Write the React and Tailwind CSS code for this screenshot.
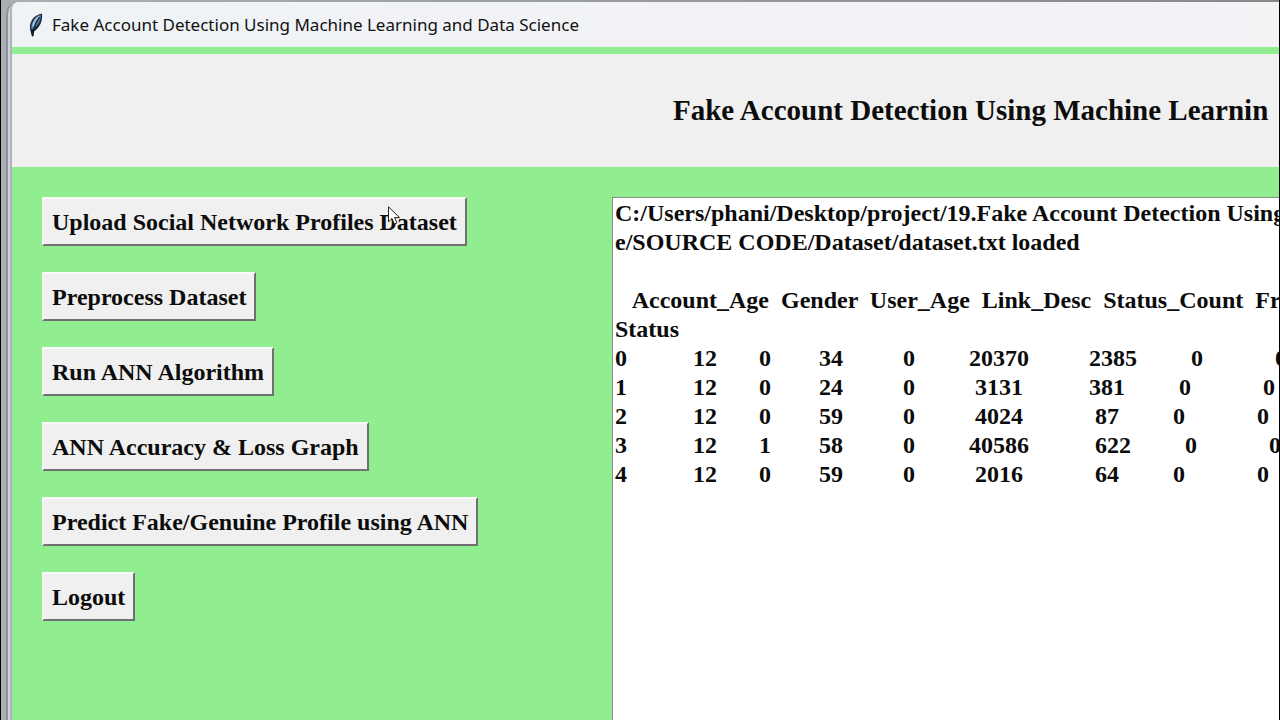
const actions = [
  "Upload Social Network Profiles Dataset",
  "Preprocess Dataset",
  "Run ANN Algorithm",
  "ANN Accuracy & Loss Graph",
  "Predict Fake/Genuine Profile using ANN",
  "Logout",
];

const output = [
  "C:/Users/phani/Desktop/project/19.Fake Account Detection Using Machine",
  "e/SOURCE CODE/Dataset/dataset.txt loaded",
  "",
  "   Account_Age  Gender  User_Age  Link_Desc  Status_Count  Friends_Count",
  "Status",
  "0           12       0        34          0         20370          2385         0            0",
  "1           12       0        24          0          3131           381         0            0",
  "2           12       0        59          0          4024            87         0            0",
  "3           12       1        58          0         40586           622         0            0",
  "4           12       0        59          0          2016            64         0            0",
].join("\n");

function FeatherIcon() {
  return (
    <svg width="16" height="24" viewBox="0 0 16 24" aria-hidden="true">
      <path d="M14 .5C10.500 1 6.500 3 4.200 6.500 2 10 1.400 13.500 2.300 17l2 2.200C8 17.500 11 14.500 12.700 10.500 14 7.300 14.500 4 14 .5z" fill="#1c2c3e" />
      <path d="M13 1.800C9.500 3 6.500 5 4.800 8.500 3.300 11.500 2.900 14 3.600 16.800 7 15 10 12 11.500 8.500c1-2.300 1.500-4.500 1.500-6.700z" fill="#4f7ea6" />
      <path d="M11.300 3.500C8 5.500 5.600 9 5 13.500" stroke="#a5c6dd" strokeWidth="1.800" fill="none" />
      <path d="M11.500 4C8 9 5.400 14 4.500 23.500" stroke="#12181f" strokeWidth="1.200" fill="none" />
      <path d="M2.300 16.500l1.400 6.500h1.600l1-5.500z" fill="#12181f" />
    </svg>
  );
}

function MousePointer() {
  return (
    <svg
      className="pointer-events-none absolute left-[376px] top-[9px]"
      width="13"
      height="19"
      viewBox="0 0 13 19"
      aria-hidden="true"
    >
      <path d="M.5.8v15l3.500-3.300 2.400 5.500 2.600-1.100-2.400-5.300h4.900z" fill="#fff" stroke="#222" strokeWidth="1" />
    </svg>
  );
}

export default function App() {
  return (
    <div className="flex h-screen overflow-hidden border-x border-black bg-gradient-to-r from-[#a9afb3] to-[#868889] pl-[5px] pt-0.5">
      {/* Window */}
      <div className="flex min-w-0 flex-1 flex-col overflow-hidden rounded-tl-xl border-l-2 border-[#8f919d] bg-[#cfd3d8] pl-0.5">
        <div className="flex min-h-0 flex-1 flex-col overflow-hidden rounded-tl-lg border-l-2 border-[#aeb4b9]">
          <div className="flex h-[45px] shrink-0 items-center gap-2 bg-gradient-to-r from-[#eff3f6] to-[#f5f2f6] pl-4">
            <FeatherIcon />
            <span className="whitespace-nowrap font-['Noto_Sans',sans-serif] text-[17px] text-[#111]">
              Fake Account Detection Using Machine Learning and Data Science
            </span>
          </div>

          <div className="flex min-h-0 flex-1 flex-col bg-[#90ee90] pt-[7px] font-['Liberation_Serif',serif] font-bold text-[#0c0c0c]">
            <h1 className="flex h-[113px] shrink-0 items-center whitespace-nowrap bg-[#f0f0f0] pl-[661px] text-[29px]">
              Fake Account Detection Using Machine Learnin
            </h1>

            <div className="flex min-h-0 flex-1 pt-[30px]">
              {/* Actions */}
              <div className="relative flex w-[600px] shrink-0 flex-col items-start gap-[26px] pl-[30px]">
                {actions.map(label => (
                  <button
                    key={label}
                    className="h-[49px] whitespace-nowrap border-2 border-b-[#707070] border-l-[#fafafa] border-r-[#707070] border-t-[#fafafa] bg-[#f0f0f0] px-2 text-[24px] leading-7"
                  >
                    {label}
                  </button>
                ))}
                <MousePointer />
              </div>

              {/* Output */}
              <textarea
                aria-label="Output"
                wrap="off"
                spellCheck={false}
                defaultValue={output}
                className="min-w-0 flex-1 resize-none overflow-hidden whitespace-pre border-l border-t border-[#8c8c8c] bg-white px-0.5 pt-px text-[24px] leading-[29px] outline-none"
              />
            </div>
          </div>
        </div>
      </div>
    </div>
  );
}
